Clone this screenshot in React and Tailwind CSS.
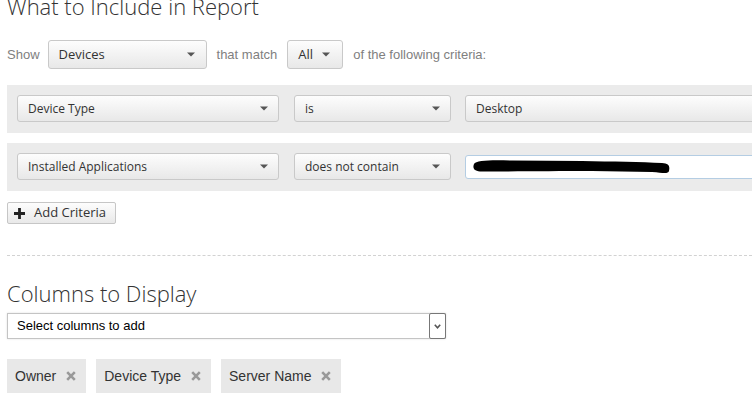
import React from 'react';

const openSans = "font-['Open_Sans',sans-serif]";
const arial = "font-['Liberation_Sans',Arial,sans-serif]";

function Caret() {
  return (
    <svg width="8" height="5" viewBox="0 0 8 5" className="shrink-0">
      <path d="M0 0.5 L8 0.5 L4 4.5 Z" fill="#555" />
    </svg>
  );
}

function FakeSelect({ label, width, height = 27, size = 'text-[12px]', caretGap }) {
  return (
    <div
      className={`flex items-center justify-between rounded-[3px] border border-[#c9c9c9] bg-linear-to-b from-[#fdfdfd] to-[#e8e8e8] pl-[10px] text-[#333] ${openSans} ${size}`}
      style={{ width, height, paddingRight: caretGap }}
    >
      <span>{label}</span>
      <Caret />
    </div>
  );
}

function Tag({ label }) {
  return (
    <div className={`flex h-[34px] items-center bg-[#e8e8e8] pl-[8px] pr-[10px] text-[14px] text-[#333] ${arial}`}>
      <span>{label}</span>
      <svg width="10" height="10" viewBox="0 0 10 10" className="ml-[10px]">
        <path d="M1.2 1.2 L8.8 8.8 M8.8 1.2 L1.2 8.8" stroke="#999" strokeWidth="2.6" />
      </svg>
    </div>
  );
}

export default function App() {
  return (
    <div className="h-[402px] w-[752px] overflow-hidden bg-white pl-[7px]">
      <h1 className={`mt-[-6px] text-[22px] font-light leading-[25px] text-[#333] ${openSans}`}>
        What to Include in Report
      </h1>

      <div className={`mt-[21px] flex h-[29px] items-center gap-[10px] text-[13px] text-[#808080] ${arial}`}>
        <span className="mr-[-2px]">Show</span>
        <FakeSelect label="Devices" width={159} height={29} size="text-[13px]" caretGap={11} />
        <span>that match</span>
        <FakeSelect label="All" width={56} height={29} size="text-[13px]" caretGap={12} />
        <span>of the following criteria:</span>
      </div>

      <div className="mt-[16px] flex h-[48px] w-[800px] gap-[15px] bg-[#ebebeb] pl-[10px] pt-[10px]">
        <FakeSelect label="Device Type" width={262} caretGap={10} />
        <FakeSelect label="is" width={157} caretGap={10} />
        <div className={`ml-[-1px] flex h-[27px] flex-1 items-center rounded-[3px] border border-[#c9c9c9] bg-linear-to-b from-[#fdfdfd] to-[#e8e8e8] pl-[10px] text-[12px] text-[#333] ${openSans}`}>
          Desktop
        </div>
      </div>

      <div className="mt-[10px] flex h-[48px] w-[800px] gap-[15px] bg-[#ebebeb] pl-[10px] pt-[10px]">
        <FakeSelect label="Installed Applications" width={262} caretGap={10} />
        <FakeSelect label="does not contain" width={157} caretGap={10} />
        <div className="ml-[-1px] mt-[2px] flex h-[24px] flex-1 items-center rounded-[3px] border border-[#b4cde3] bg-white pl-[6px]">
          <svg width="200" height="18" viewBox="0 0 200 18">
            <path
              d="M2 6 C4 2 20 2 40 2.5 L110 3 C140 3.5 170 4 190 5 C197 5.5 198 8 197 13 C196 16 192 15 180 14 L120 13 C80 13 40 13.5 10 13.5 C3 13.5 0 11 2 6 Z"
              fill="#000"
            />
          </svg>
        </div>
      </div>

      <button className={`mt-[11px] flex h-[22px] w-[109px] items-center rounded-[2px] border border-[#c6c6c6] bg-linear-to-b from-[#fdfdfd] to-[#e9e9e9] pl-[6px] text-[13px] text-[#333] ${openSans}`}>
        <svg width="11" height="11" viewBox="0 0 11 11" className="mr-[9px]">
          <path d="M5.5 0 V11 M0 5.5 H11" stroke="#222" strokeWidth="2.8" />
        </svg>
        Add Criteria
      </button>

      <div className="mt-[31px] border-t border-dashed border-[#d2d2d2]" />

      <h2 className={`mt-[25px] text-[22px] font-light leading-[25px] text-[#333] ${openSans}`}>
        Columns to Display
      </h2>

      <div className={`mt-[7px] flex h-[26px] w-[439px] items-center justify-between border border-[#c4c4c4] bg-white pl-[9px] text-[13px] text-black shadow-[0_0_2px_rgba(0,0,0,0.12)] ${arial}`}>
        <span>Select columns to add</span>
        <div className="mr-[-1px] flex h-[26px] w-[17px] items-center justify-center rounded-[2px] border border-[#777] bg-white">
          <svg width="7" height="5" viewBox="0 0 7 5">
            <path d="M0.8 0.8 L3.5 3.8 L6.2 0.8" stroke="#555" strokeWidth="1.6" fill="none" />
          </svg>
        </div>
      </div>

      <div className="mt-[20px] flex gap-[10px]">
        <Tag label="Owner" />
        <Tag label="Device Type" />
        <Tag label="Server Name" />
      </div>
    </div>
  );
}
